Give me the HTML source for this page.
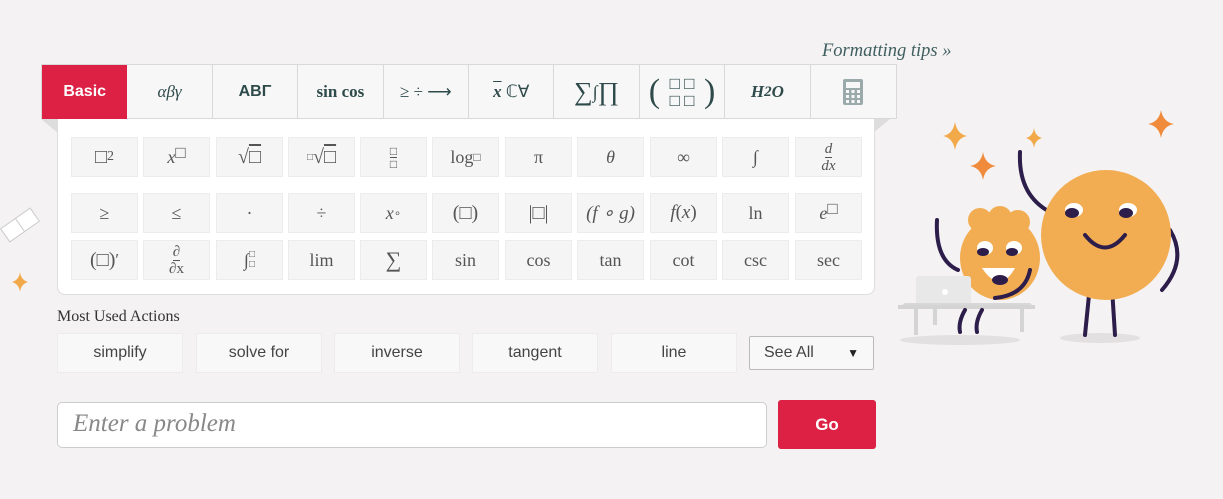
<!DOCTYPE html>
<html><head><meta charset="utf-8"><style>
*{box-sizing:border-box;margin:0;padding:0}
body{width:1223px;height:499px;background:#f4f2f3;position:relative;overflow:hidden;font-family:"Liberation Serif",serif;color:#333}
.abs{position:absolute}
.tips{left:822px;top:41px;font-style:italic;font-size:18.5px;color:#3f5e5e}
.tabs{left:41px;top:64px;height:55px;width:856px;display:flex;background:#f7f7f7;border:1px solid #d9d9d9}
.tab{width:85.6px;height:54px;border-right:1px solid #d9d9d9;display:flex;align-items:center;justify-content:center;font-size:17px;color:#2f4a4a}
.tab:last-child{border-right:none}
.tab.on{background:#dc2144;color:#fff;font-family:"Liberation Sans",sans-serif;font-weight:bold;font-size:16px;border:none}
.panel{left:57px;top:119px;width:818px;height:176px;background:#fff;border:1px solid #ddd;border-top:none;border-radius:0 0 8px 8px}
.k{position:absolute;width:67px;height:40px;background:#f5f5f5;border:1px solid #ececec;display:flex;align-items:center;justify-content:center;font-size:18px;color:#555}
.mua{left:57px;top:308px;font-size:16px;color:#333}
.act{top:333px;height:40px;width:126px;background:#f8f8f8;border:1px solid #ececec;display:flex;align-items:center;justify-content:center;font-family:"Liberation Sans",sans-serif;font-size:16px;color:#444}
.see{left:749px;top:336px;width:125px;height:34px;background:#f8f8f8;border:1px solid #bbb;border-radius:2px;font-family:"Liberation Sans",sans-serif;font-size:16px;color:#444;padding:7px 14px}
.inp{left:57px;top:402px;width:710px;height:46px;background:#fff;border:1px solid #ccc;border-radius:5px;font-style:italic;font-size:25px;color:#888;padding:7px 15px}
.go{left:778px;top:400px;width:98px;height:49px;background:#dc2144;border-radius:3px;color:#fff;font-family:"Liberation Sans",sans-serif;font-weight:bold;font-size:17px;display:flex;align-items:center;justify-content:center}
sup.b{font-size:17px;position:relative;top:-4px}
</style></head><body>
<div class="abs tips">Formatting tips »</div>
<svg class="abs" style="left:41px;top:119px" width="18" height="14"><path d="M0 0H17V14Z" fill="#ddd"/></svg>
<svg class="abs" style="left:873px;top:119px" width="18" height="14"><path d="M0 0H17L0 14Z" fill="#ddd"/></svg>
<div class="abs tabs">
<div class="tab on">Basic</div>
<div class="tab" style="font-style:italic">αβγ</div>
<div class="tab" style="font-family:'Liberation Sans';font-weight:bold;font-size:16px">ΑΒΓ</div>
<div class="tab" style="font-weight:bold">sin cos</div>
<div class="tab">≥ ÷ ⟶</div>
<div class="tab"><span style="text-decoration:overline;font-style:italic;font-weight:bold">x</span>&nbsp;ℂ∀</div>
<div class="tab" style="font-size:26px;font-weight:100">∑<span style="font-size:18px;vertical-align:6px">∫</span>∏</div>
<div class="tab" style="font-size:34px;font-weight:100">(<span style="font-size:17px;line-height:17px;display:inline-block;width:44px;text-align:center">□ □<br>□ □</span>)</div>
<div class="tab" style="font-style:italic;font-weight:bold">H<span style="font-size:15px;vertical-align:-3px">2</span>O</div>
<div class="tab"><svg width="20" height="26"><rect width="20" height="26" rx="2" fill="#9aa9a9"/><rect x="3" y="3" width="14" height="6" fill="#f7f7f7"/><g fill="#f7f7f7"><rect x="3" y="11" width="3" height="3"/><rect x="8.5" y="11" width="3" height="3"/><rect x="14" y="11" width="3" height="3"/><rect x="3" y="16" width="3" height="3"/><rect x="8.5" y="16" width="3" height="3"/><rect x="14" y="16" width="3" height="3"/><rect x="3" y="21" width="3" height="3"/><rect x="8.5" y="21" width="3" height="3"/><rect x="14" y="21" width="3" height="3"/></g></svg></div>
</div>
<div class="abs panel"></div>
<div class="k" style="left:71px;top:137px;font-size:20px">□<sup style="font-size:14px">2</sup></div>
<div class="k" style="left:143px;top:137px"><i>x</i><sup class="b">□</sup></div>
<div class="k" style="left:216px;top:137px;font-size:20px">√<span style="text-decoration:overline">□</span></div>
<div class="k" style="left:288px;top:137px;font-size:20px"><sup style="font-size:10px">□</sup>√<span style="text-decoration:overline">□</span></div>
<div class="k" style="left:360px;top:137px;font-size:12px;flex-direction:column;line-height:12px"><span style="border-bottom:1px solid #555">□</span>□</div>
<div class="k" style="left:432px;top:137px">log<sub style="font-size:12px">□</sub></div>
<div class="k" style="left:505px;top:137px">π</div>
<div class="k" style="left:577px;top:137px"><i>θ</i></div>
<div class="k" style="left:650px;top:137px">∞</div>
<div class="k" style="left:722px;top:137px">∫</div>
<div class="k" style="left:795px;top:137px;font-size:15px;flex-direction:column;line-height:16px;font-style:italic"><span style="border-bottom:1px solid #555">d</span>dx</div>
<div class="k" style="left:71px;top:193px">≥</div>
<div class="k" style="left:143px;top:193px">≤</div>
<div class="k" style="left:216px;top:193px">·</div>
<div class="k" style="left:288px;top:193px">÷</div>
<div class="k" style="left:360px;top:193px"><i>x</i><sup style="font-size:12px">∘</sup></div>
<div class="k" style="left:432px;top:193px;font-size:20px">(□)</div>
<div class="k" style="left:505px;top:193px;font-size:20px">|□|</div>
<div class="k" style="left:577px;top:193px;font-size:19px"><i>(f ∘ g)</i></div>
<div class="k" style="left:650px;top:193px;font-size:19px"><i>f</i>(<i>x</i>)</div>
<div class="k" style="left:722px;top:193px">ln</div>
<div class="k" style="left:795px;top:193px"><i>e</i><sup class="b">□</sup></div>
<div class="k" style="left:71px;top:240px;font-size:20px">(□)<sup>′</sup></div>
<div class="k" style="left:143px;top:240px;font-size:15px;flex-direction:column;line-height:16px"><span style="border-bottom:1px solid #555">∂</span>∂x</div>
<div class="k" style="left:216px;top:240px">∫<span style="font-size:10px;line-height:10px">□<br>□</span></div>
<div class="k" style="left:288px;top:240px">lim</div>
<div class="k" style="left:360px;top:240px;font-size:22px">∑</div>
<div class="k" style="left:432px;top:240px">sin</div>
<div class="k" style="left:505px;top:240px">cos</div>
<div class="k" style="left:577px;top:240px">tan</div>
<div class="k" style="left:650px;top:240px">cot</div>
<div class="k" style="left:722px;top:240px">csc</div>
<div class="k" style="left:795px;top:240px">sec</div>
<div class="abs mua">Most Used Actions</div>
<div class="abs act" style="left:57px">simplify</div>
<div class="abs act" style="left:196px">solve for</div>
<div class="abs act" style="left:334px">inverse</div>
<div class="abs act" style="left:472px">tangent</div>
<div class="abs act" style="left:611px">line</div>
<div class="abs see">See All <span style="float:right;font-size:12px;color:#222;margin-top:2px">▼</span></div>
<div class="abs inp">Enter a problem</div>
<div class="abs go">Go</div>
<svg class="abs" style="left:0;top:200px" width="40" height="100">
<g transform="rotate(-35 20 25)"><rect x="2" y="17" width="36" height="16" fill="#fff" stroke="#ccc"/><line x1="20" y1="17" x2="20" y2="33" stroke="#ccc"/></g>
<path d="M20 72 Q21 80 28 82 Q21 84 20 92 Q19 84 12 82 Q19 80 20 72Z" fill="#f2a94a"/>
</svg>
<svg class="abs" style="left:890px;top:100px" width="300" height="250">
<g fill="#f2a94a"><path d="M65 22Q67 34 77 36Q67 38 65 50Q63 38 53 36Q63 34 65 22Z"/><path d="M144 28Q145 36 152 38Q145 40 144 48Q143 40 136 38Q143 36 144 28Z"/><path d="M93 52Q95 64 106 66Q95 68 93 80Q91 68 80 66Q91 64 93 52Z" fill="#ef8b3a"/><path d="M271 10Q273 22 284 24Q273 26 271 38Q269 26 258 24Q269 22 271 10Z" fill="#ef8b3a"/></g>
<ellipse cx="70" cy="240" rx="60" ry="5" fill="#e2e0e1"/><ellipse cx="210" cy="238" rx="40" ry="5" fill="#e2e0e1"/>
<path d="M130 52Q128 95 160 112" stroke="#2d1d4a" stroke-width="4" fill="none" stroke-linecap="round"/>
<path d="M280 130Q298 160 272 190" stroke="#2d1d4a" stroke-width="4" fill="none" stroke-linecap="round"/>
<path d="M200 185L195 235M222 188L225 235" stroke="#2d1d4a" stroke-width="4" fill="none" stroke-linecap="round"/>
<circle cx="216" cy="135" r="65" fill="#f2ad52"/>
<ellipse cx="184" cy="110" rx="9" ry="7" fill="#fff"/><ellipse cx="182" cy="113" rx="7" ry="5" fill="#2d1d4a"/>
<ellipse cx="238" cy="110" rx="9" ry="7" fill="#fff"/><ellipse cx="236" cy="113" rx="7" ry="5" fill="#2d1d4a"/>
<path d="M195 135Q215 160 235 135" stroke="#2d1d4a" stroke-width="4" fill="none" stroke-linecap="round"/>
<path d="M47 120Q45 160 68 170" stroke="#2d1d4a" stroke-width="4" fill="none" stroke-linecap="round"/>
<circle cx="90" cy="120" r="12" fill="#f2ad52"/><circle cx="128" cy="122" r="12" fill="#f2ad52"/><circle cx="110" cy="118" r="12" fill="#f2ad52"/>
<ellipse cx="110" cy="158" rx="40" ry="42" fill="#f2ad52"/>
<ellipse cx="95" cy="148" rx="8" ry="7" fill="#fff"/><ellipse cx="93" cy="152" rx="6" ry="4" fill="#2d1d4a"/>
<ellipse cx="124" cy="148" rx="8" ry="7" fill="#fff"/><ellipse cx="122" cy="152" rx="6" ry="4" fill="#2d1d4a"/>
<path d="M92 168Q110 195 125 168Z" fill="#fff"/><ellipse cx="110" cy="180" rx="8" ry="5" fill="#2d1d4a"/>
<path d="M140 170Q135 195 105 198" stroke="#2d1d4a" stroke-width="4" fill="none" stroke-linecap="round"/>
<rect x="26" y="176" width="55" height="30" rx="3" fill="#e8e8e8"/><circle cx="55" cy="192" r="3" fill="#fff"/>
<path d="M8 208H145L140 203H15Z" fill="#d8d8d8"/><rect x="8" y="205" width="137" height="4" fill="#d4d4d4"/>
<path d="M26 209V235M132 209V232M45 209V225" stroke="#d4d4d4" stroke-width="4"/>
<path d="M75 210Q68 222 70 232M92 210Q85 222 87 232" stroke="#2d1d4a" stroke-width="4" fill="none" stroke-linecap="round"/>
</svg>
</body></html>
